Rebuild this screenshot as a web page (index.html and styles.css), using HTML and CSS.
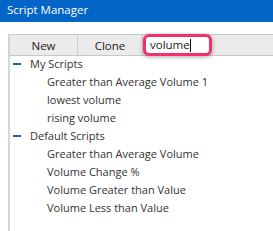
FILE: index.html
```html
<!DOCTYPE html>
<html>
<head>
<meta charset="utf-8">
<link rel="stylesheet" href="styles.css">
</head>
<body>
<div class="window">
  <div class="titlebar">Script Manager</div>
  <div class="panel">
    <div class="toolbar">
      <button class="tbtn new">New</button>
      <button class="tbtn clone">Clone</button>
      <div class="search"><span class="stext">volume</span><span class="caret"></span></div>
    </div>
    <ul class="tree">
      <li class="group"><span class="toggle"></span>My Scripts</li>
      <li class="item">Greater than Average Volume 1</li>
      <li class="item">lowest volume</li>
      <li class="item">rising volume</li>
      <li class="group"><span class="toggle"></span>Default Scripts</li>
      <li class="item">Greater than Average Volume</li>
      <li class="item">Volume Change %</li>
      <li class="item">Volume Greater than Value</li>
      <li class="item">Volume Less than Value</li>
    </ul>
  </div>
</div>
</body>
</html>
```
FILE: styles.css
```css
html, body {
  margin: 0;
  padding: 0;
  background: #ffffff;
  font-family: "Open Sans", "Noto Sans", sans-serif;
  font-size: 11px;
  color: #333333;
  overflow: hidden;
}
.window {
  width: 273px;
  height: 231px;
  display: flex;
  flex-direction: column;
}
.titlebar {
  height: 22px;
  background: #0365c6;
  color: #ffffff;
  font-size: 11.5px;
  line-height: 20px;
  padding-left: 7px;
  box-sizing: border-box;
}
.panel {
  margin: 12px 0 0 8px;
  border-left: 2px solid #d4d4d4;
  flex: 1;
}
.toolbar {
  height: 20px;
  display: flex;
  align-items: center;
  background: #ebebeb;
  border-top: 1px solid #c8c8c8;
  border-bottom: 1px solid #c8c8c8;
}
.tbtn {
  font: inherit;
  font-size: 11.5px;
  color: #222;
  background: transparent;
  border: none;
  border-right: 1px solid #d0d0d0;
  height: 20px;
  padding: 0;
  margin: 0;
}
.new { width: 68px; }
.clone { width: 65px; }
.search {
  width: 69px;
  height: 22px;
  box-sizing: border-box;
  border: 3px solid #f4306c;
  border-radius: 6px;
  background: #ffffff;
  box-shadow: 0 1px 4px rgba(0,0,0,0.35);
  display: flex;
  align-items: center;
  padding-left: 4px;
  color: #222;
  font-size: 11.5px;
  line-height: 12px;
}
.caret {
  display: inline-block;
  width: 1px;
  height: 13px;
  background: #111;
}
.tree {
  list-style: none;
  margin: -1px 0 0 0;
  padding: 0;
}
.tree li {
  height: 18px;
  line-height: 18px;
  white-space: nowrap;
}
.group {
  display: flex;
  align-items: center;
  padding-left: 3px;
}
.toggle {
  display: inline-block;
  width: 8px;
  height: 2px;
  background: #1b63b8;
  margin-right: 9px;
}
.item {
  padding-left: 37px;
}
```
